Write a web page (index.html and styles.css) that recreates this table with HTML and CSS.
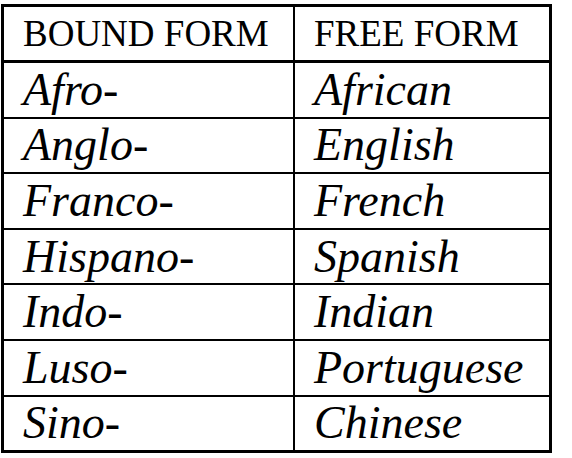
FILE: index.html
```html
<!DOCTYPE html>
<html>
<head>
<meta charset="utf-8">
<link rel="stylesheet" href="styles.css">
</head>
<body>
<table class="forms">
  <thead>
    <tr><th>BOUND FORM</th><th>FREE FORM</th></tr>
  </thead>
  <tbody>
    <tr><td>Afro-</td><td>African</td></tr>
    <tr><td>Anglo-</td><td>English</td></tr>
    <tr><td>Franco-</td><td>French</td></tr>
    <tr><td>Hispano-</td><td>Spanish</td></tr>
    <tr><td>Indo-</td><td>Indian</td></tr>
    <tr><td>Luso-</td><td>Portuguese</td></tr>
    <tr><td>Sino-</td><td>Chinese</td></tr>
  </tbody>
</table>
</body>
</html>
```

FILE: styles.css
```css
html, body {
  margin: 0;
  padding: 0;
  background: #fff;
}
body {
  padding: 4px 0 0 1px;
  font-family: "Liberation Serif", "Times New Roman", serif;
  color: #000;
}
.forms {
  border-collapse: collapse;
  border: 3px solid #000;
}
.forms th, .forms td {
  border: 2px solid #000;
  text-align: left;
  vertical-align: middle;
  padding: 0 0 0 19px;
}
.forms th {
  font-weight: normal;
  font-size: 37px;
  height: 53px;
  line-height: 1;
  border-bottom: 3px solid #000;
}
.forms th:first-child, .forms td:first-child {
  width: 270px;
}
.forms th:last-child, .forms td:last-child {
  width: 235px;
}
.forms td {
  font-style: italic;
  font-size: 46px;
  height: 54px;
  line-height: 1;
}
.forms td {
  height: 53.6px;
}
```
